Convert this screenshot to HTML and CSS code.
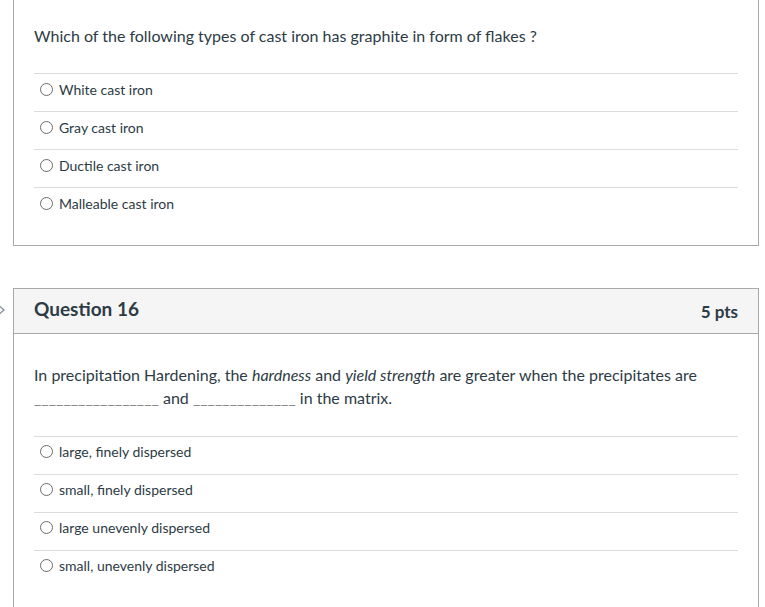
FILE: index.html
```html
<!DOCTYPE html>
<html>
<head>
<meta charset="utf-8">
<link rel="stylesheet" href="styles.css">
</head>
<body>
<div class="page">
  <div class="card card-top">
    <div class="body">
      <p class="qtext">Which of the following types of cast iron has graphite in form of flakes ?</p>
      <div class="answers">
        <label class="answer"><span class="radio"></span><span>White cast iron</span></label>
        <label class="answer"><span class="radio"></span><span>Gray cast iron</span></label>
        <label class="answer"><span class="radio"></span><span>Ductile cast iron</span></label>
        <label class="answer"><span class="radio"></span><span>Malleable cast iron</span></label>
      </div>
    </div>
  </div>

  <div class="card card-q16">
    <span class="marker"><svg width="6" height="14" viewBox="0 0 6 14"><path d="M-3 1 L4 7 L-3 13" fill="none" stroke="#7a8a99" stroke-width="1.2"/></svg></span>
    <div class="header">
      <h2 class="title">Question 16</h2>
      <span class="pts">5 pts</span>
    </div>
    <div class="body">
      <p class="qtext q2">In precipitation Hardening, the <em>hardness</em> and <em>yield strength</em> are greater when the precipitates are <span class="blank">_________________</span> and <span class="blank">______________</span> in the matrix.</p>
      <div class="answers">
        <label class="answer"><span class="radio"></span><span>large, finely dispersed</span></label>
        <label class="answer"><span class="radio"></span><span>small, finely dispersed</span></label>
        <label class="answer"><span class="radio"></span><span>large unevenly dispersed</span></label>
        <label class="answer"><span class="radio"></span><span>small, unevenly dispersed</span></label>
      </div>
    </div>
  </div>
</div>
</body>
</html>
```

FILE: styles.css
```css
html, body {
  margin: 0;
  padding: 0;
  background: #fff;
}
body {
  font-family: Lato, "Open Sans", sans-serif;
  color: #2d3b45;
}
.page {
  padding-left: 13px;
  width: 746px;
}
.card {
  border: 1px solid #a9a9a9;
  background: #fff;
  position: relative;
}
.card-top {
  border-top: none;
}
.card-q16 {
  margin-top: 42px;
  height: 330px;
  border-bottom: none;
}
.marker {
  position: absolute;
  left: -14px;
  top: 14px;
  display: block;
  width: 6px;
  height: 14px;
}
.marker svg { display: block; }
.header {
  background: #f5f5f5;
  border-bottom: 1px solid #a9a9a9;
  height: 44px;
  display: flex;
  align-items: center;
  justify-content: space-between;
  padding: 0 20px;
}
.title {
  margin: 0;
  font-size: 19px;
  font-weight: bold;
  color: #2d3b45;
  padding-bottom: 5px;
}
.pts {
  font-size: 17px;
  font-weight: bold;
  color: #2d3b45;
  padding-top: 1px;
}
.body {
  padding: 0 20px 20px;
}
.card-top .body {
  padding-top: 24px;
}
.card-q16 .body {
  padding-top: 29px;
}
.qtext {
  margin: 0 0 25px;
  font-size: 16px;
  line-height: 24px;
}
.q2 {
  line-height: 23px;
  margin-bottom: 27px;
}
.blank {
  color: #8a8a8a;
}
.answers {
  display: flex;
  flex-direction: column;
}
.answer {
  display: flex;
  align-items: center;
  border-top: 1px solid #dcdcdc;
  font-size: 14px;
  padding-left: 6px;
  gap: 6px;
  padding-bottom: 6px;
  box-sizing: border-box;
  height: 38px;
}
.card-q16 .answer {
  padding-bottom: 8px;
}
.radio {
  width: 13px;
  height: 13px;
  border: 1px solid #6b6b6b;
  border-radius: 50%;
  box-sizing: border-box;
  display: inline-block;
  flex: none;
}
```
